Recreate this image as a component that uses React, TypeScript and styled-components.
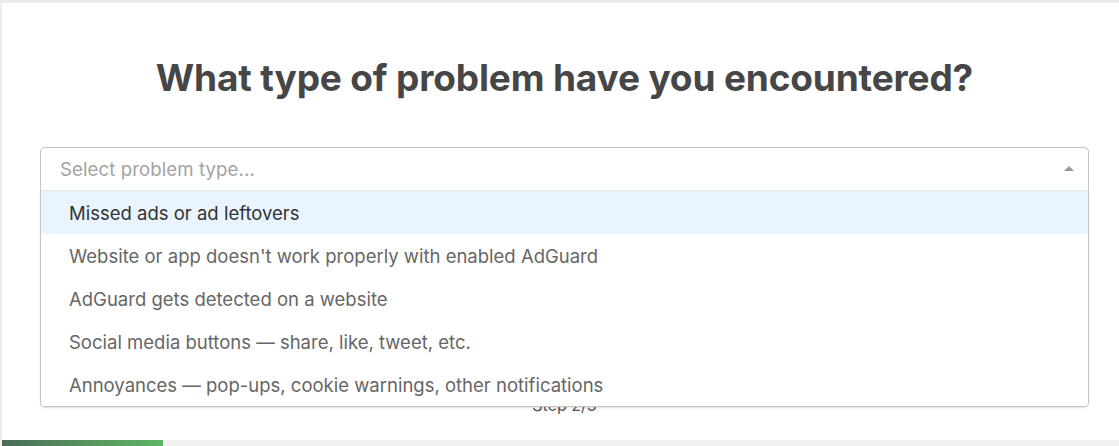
import React from "react";
import styled, { createGlobalStyle } from "styled-components";

const GlobalStyle = createGlobalStyle`
  html, body { margin: 0; padding: 0; }
  body {
    background: #ececec;
    font-family: Inter, "Noto Sans", "Liberation Sans", sans-serif;
    overflow: hidden;
  }
`;

const Page = styled.div`
  width: 1119px;
  height: 446px;
  padding: 3px 0 0 2px;
  box-sizing: border-box;
  overflow: hidden;
  display: flex;
  flex-direction: column;
`;

const Card = styled.main`
  width: 1125px;
  height: 437px;
  flex: none;
  background: #ffffff;
  box-sizing: border-box;
  padding: 0 38px;
  display: flex;
  flex-direction: column;
  align-items: stretch;
`;

const Title = styled.h1`
  margin: 51px 0 0;
  text-align: center;
  font-size: 37px;
  line-height: 48px;
  font-weight: 700;
  color: #464646;
  letter-spacing: -0.15px;
`;

const SelectWrap = styled.div`
  position: relative;
  margin-top: 45px;
`;

const Control = styled.div<{ $open: boolean }>`
  height: 44px;
  box-sizing: border-box;
  border: 1px solid #c4c4c4;
  border-radius: ${(p) => (p.$open ? "5px 5px 0 0" : "5px")};
  border-bottom-color: ${(p) => (p.$open ? "#e6e6e6" : "#c4c4c4")};
  display: flex;
  align-items: center;
  justify-content: space-between;
  padding: 0 14px 0 19px;
  background: #fff;
`;

const Placeholder = styled.span`
  font-size: 18.6px;
  color: #a3a3a3;
  letter-spacing: 0.1px;
`;

const Arrow = styled.span`
  width: 0;
  height: 0;
  border-left: 5px solid transparent;
  border-right: 5px solid transparent;
  border-bottom: 5px solid #999;
  margin-bottom: 2px;
`;

const Menu = styled.ul`
  position: absolute;
  left: 0;
  right: 0;
  top: 100%;
  margin: 0;
  padding: 0;
  list-style: none;
  background: #fff;
  border: 1px solid #c4c4c4;
  border-top: none;
  border-radius: 0 0 5px 5px;
  box-shadow: 0 1px 2px rgba(0, 0, 0, 0.12);
  z-index: 2;
  overflow: hidden;
`;

const Option = styled.li<{ $active?: boolean }>`
  height: 43px;
  box-sizing: border-box;
  display: flex;
  align-items: center;
  padding-left: 28px;
  font-size: 18.5px;
  color: ${(p) => (p.$active ? "#333" : "#666")};
  background: ${(p) => (p.$active ? "#eaf4fe" : "#fff")};
`;

const Step = styled.div`
  margin-top: 204px;
  text-align: center;
  font-size: 16px;
  line-height: 20px;
  color: #555;
`;

const Progress = styled.div`
  height: 6px;
  width: 1119px;
  flex: none;
  background: #f1f1f1;
  margin-left: -2px;
  padding-left: 2px;
  box-sizing: border-box;
`;

const Fill = styled.div`
  height: 100%;
  background: linear-gradient(90deg, #4c6c57 0%, #55935d 50%, #5db463 100%);
`;

const options = [
  "Missed ads or ad leftovers",
  "Website or app doesn't work properly with enabled AdGuard",
  "AdGuard gets detected on a website",
  "Social media buttons — share, like, tweet, etc.",
  "Annoyances — pop-ups, cookie warnings, other notifications",
];

export default function App() {
  const progress = 161;
  return (
    <>
      <GlobalStyle />
      <Page>
        <Card>
          <Title>What type of problem have you encountered?</Title>
          <SelectWrap>
            <Control $open>
              <Placeholder>Select problem type...</Placeholder>
              <Arrow />
            </Control>
            <Menu>
              {options.map((o, i) => (
                <Option key={o} $active={i === 0}>
                  {o}
                </Option>
              ))}
            </Menu>
          </SelectWrap>
          <Step>Step 2/3</Step>
        </Card>
        <Progress>
          <Fill style={{ width: progress }} />
        </Progress>
      </Page>
    </>
  );
}
